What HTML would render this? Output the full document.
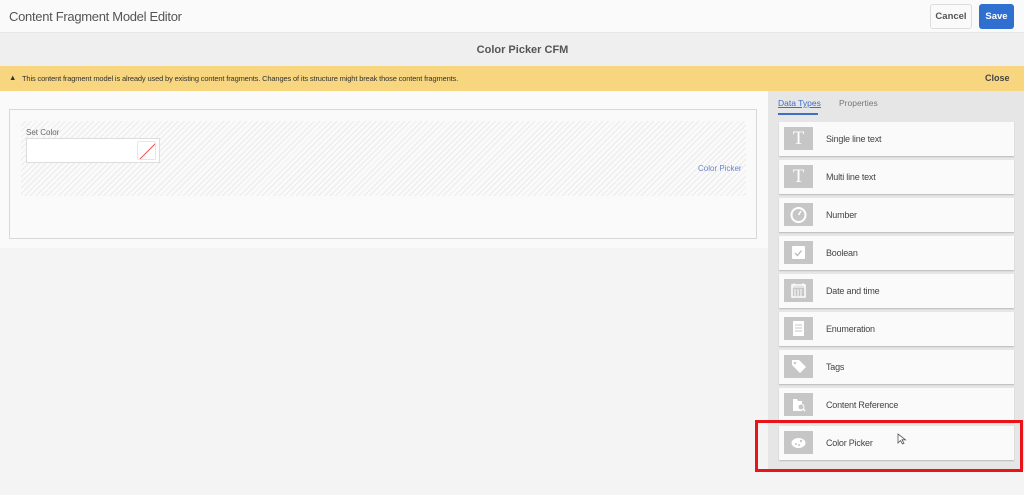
<!DOCTYPE html>
<html><head><style>
*{margin:0;padding:0;box-sizing:border-box}
body{width:1024px;height:495px;overflow:hidden;background:#f4f4f4;font-family:"Liberation Sans",sans-serif;position:relative;color:#4b4b4b}
.abs{position:absolute}
.card{position:absolute;left:779px;width:235px;height:34px;background:#fafafa;box-shadow:0 1px 1px #bbb}
.card .ic{position:absolute;left:5px;top:5px;width:29px;height:23px;background:#c6c6c6;color:#fff;font-family:"Liberation Serif",serif;font-size:19px;text-align:center;line-height:23px}
.card .t{position:absolute;left:47px;top:12px;font-size:9px;color:#444;letter-spacing:-0.2px}
</style></head><body>
<div class="abs" style="left:0;top:0;width:1024px;height:33px;background:#fafafa;border-bottom:1px solid #e6e6e6"></div>
<div class="abs" style="left:9px;top:9px;font-size:13px;color:#555;letter-spacing:-0.3px">Content Fragment Model Editor</div>
<div class="abs" style="left:930px;top:4px;width:42px;height:25px;border:1px solid #ddd;border-radius:3px;background:#fafafa;font-size:9.5px;font-weight:bold;color:#555;text-align:center;line-height:23px">Cancel</div>
<div class="abs" style="left:979px;top:4px;width:35px;height:25px;border-radius:3px;background:#2f6fcf;font-size:9.5px;font-weight:bold;color:#fff;text-align:center;line-height:25px">Save</div>
<div class="abs" style="left:0;top:33px;width:1024px;height:33px;background:#efefef"></div>
<div class="abs" style="left:0;top:44px;width:1045px;text-align:center;font-size:11px;font-weight:bold;color:#555">Color Picker CFM</div>
<div class="abs" style="left:0;top:66px;width:1024px;height:25px;background:#f8d67f"></div>
<div class="abs" style="left:9px;top:73px;font-size:7.5px;color:#333">▲</div>
<div class="abs" style="left:22px;top:74px;font-size:7.5px;color:#333;letter-spacing:-0.15px">This content fragment model is already used by existing content fragments. Changes of its structure might break those content fragments.</div>
<div class="abs" style="left:985px;top:73px;font-size:9px;font-weight:bold;color:#444">Close</div>
<div class="abs" style="left:0;top:91px;width:768px;height:157px;background:#fafafa"></div>
<div class="abs" style="left:9px;top:109px;width:748px;height:130px;border:1px solid #d8d8d8;background:#fafafa"></div>
<div class="abs" style="left:21px;top:121px;width:725px;height:75px;background:repeating-linear-gradient(135deg,#fafafa 0 3px,#ebebeb 3px 4px)"></div>
<div class="abs" style="left:26px;top:128px;font-size:8px;color:#666">Set Color</div>
<div class="abs" style="left:26px;top:138px;width:134px;height:25px;background:#fff;border:1px solid #ddd"></div>
<div class="abs" style="left:137px;top:141px;width:19px;height:19px;border:1px solid #e6e6e6;border-radius:2px;overflow:hidden"><svg width="19" height="19"><line x1="1" y1="18" x2="18" y2="1" stroke="#e55" stroke-width="1"/></svg></div>
<div class="abs" style="left:698px;top:164px;font-size:8px;color:#6a86c8">Color Picker</div>
<div class="abs" style="left:768px;top:91px;width:256px;height:378px;background:#e6e6e6"></div>
<div class="abs" style="left:778px;top:98px;font-size:8.5px;color:#3d6fc9;text-decoration:underline">Data Types</div>
<div class="abs" style="left:778px;top:113px;width:40px;height:2px;background:#3d6fc9"></div>
<div class="abs" style="left:839px;top:98px;font-size:8.5px;color:#777">Properties</div>
<div class="card" style="top:122px"><div class="ic">T</div><div class="t">Single line text</div></div>
<div class="card" style="top:160px"><div class="ic">T</div><div class="t">Multi line text</div></div>
<div class="card" style="top:198px"><div class="ic"><svg width="29" height="23"><circle cx="14.5" cy="12" r="7" fill="none" stroke="#fff" stroke-width="2"/><line x1="14.5" y1="12" x2="17" y2="8" stroke="#fff" stroke-width="1.5"/></svg></div><div class="t">Number</div></div>
<div class="card" style="top:236px"><div class="ic"><svg width="29" height="23"><rect x="8" y="5" width="13" height="13" rx="1" fill="#fff"/><path d="M11 12l2.5 2.5 4-5" stroke="#bbb" stroke-width="1.4" fill="none"/></svg></div><div class="t">Boolean</div></div>
<div class="card" style="top:274px"><div class="ic"><svg width="29" height="23"><rect x="8" y="6" width="13" height="12" fill="none" stroke="#fff" stroke-width="1.5"/><path d="M8 8h13M11 10v7M14 10v7M17 10v7M10 4v3M19 4v3" stroke="#fff" stroke-width="1"/></svg></div><div class="t">Date and time</div></div>
<div class="card" style="top:312px"><div class="ic"><svg width="29" height="23"><rect x="9" y="4" width="11" height="15" fill="#fff"/><path d="M11 8h7M11 11h7M11 14h7" stroke="#c6c6c6"/></svg></div><div class="t">Enumeration</div></div>
<div class="card" style="top:350px"><div class="ic"><svg width="29" height="23"><path d="M8 5h7l7 7-6 6-8-8z" fill="#fff"/><circle cx="11" cy="8" r="1.2" fill="#c6c6c6"/></svg></div><div class="t">Tags</div></div>
<div class="card" style="top:388px"><div class="ic"><svg width="29" height="23"><path d="M9 6h4l1 2h4v10H9z" fill="#fff"/><circle cx="17" cy="14" r="3" fill="#c6c6c6" stroke="#fff"/><line x1="19" y1="16" x2="21" y2="18" stroke="#fff" stroke-width="1.5"/></svg></div><div class="t">Content Reference</div></div>
<div class="card" style="top:426px"><div class="ic"><svg width="29" height="23"><ellipse cx="14.5" cy="12" rx="7" ry="5" fill="#fff"/><circle cx="12" cy="13" r="1" fill="#c6c6c6"/><circle cx="15" cy="14" r="1" fill="#c6c6c6"/><circle cx="17" cy="10" r="1.2" fill="#c6c6c6"/></svg></div><div class="t">Color Picker</div></div>
<svg class="abs" style="left:897px;top:433px" width="10" height="12"><path d="M1 1v9l2.5-2.5 2 3.5 1.5-.8-2-3.4H8.5z" fill="#fff" stroke="#555" stroke-width="0.8"/></svg>
<div class="abs" style="left:755px;top:420px;width:268px;height:52px;border:3px solid #e8141a"></div>
</body></html>
